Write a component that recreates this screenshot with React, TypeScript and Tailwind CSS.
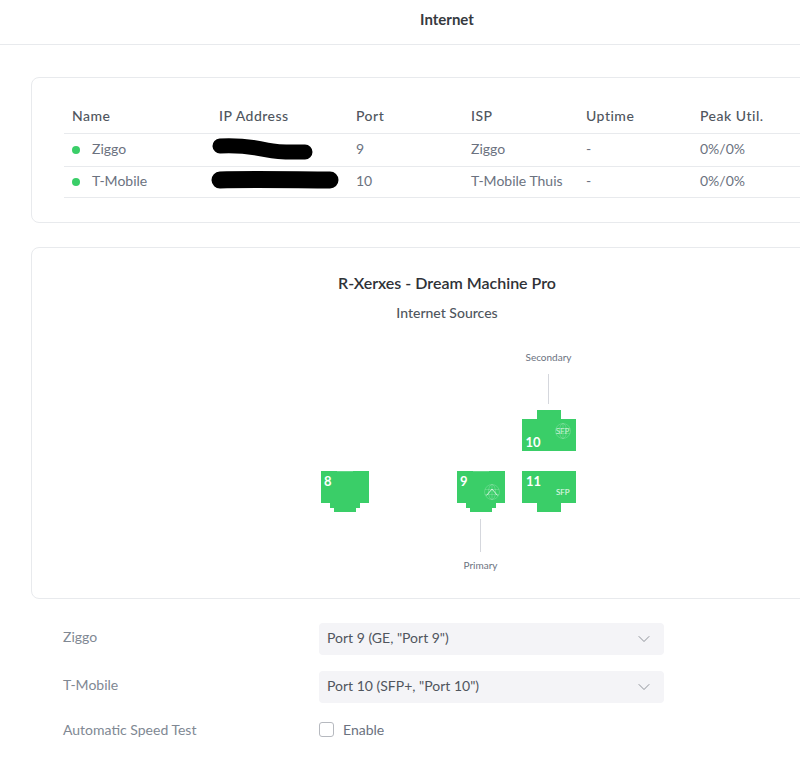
import { ChevronDown } from "lucide-react";

const green = "#3ACE68";

function PortGlobe({ sfp }: { sfp?: boolean }) {
  return (
    <svg width="16" height="16" viewBox="0 0 16 16" fill="none" stroke="#fff" strokeOpacity="0.3" strokeWidth="0.6">
      <circle cx="8" cy="8" r="7.5" />
      <ellipse cx="8" cy="8" rx="3.5" ry="7.5" />
      <path d="M1 5.5H15M1 10.5H15M8 .5V15.5" />
      {!sfp && <path d="M2.5 11.5L8 5L13.5 11.5" stroke="#fff" strokeOpacity="0.75" strokeWidth="1" />}
    </svg>
  );
}

function RjPort({ num, globe }: { num: string; globe?: boolean }) {
  return (
    <div className="relative w-12 h-[41px]">
      <svg width="48" height="41" viewBox="0 0 48 41">
        <path d="M0 0H48V32H39V37H35V41H13V37H9V32H0Z" fill={green} />
        <rect x="16" y="0" width="16" height="1" fill="#fff" opacity="0.2" />
      </svg>
      <span className="absolute left-[3px] top-px text-[13px] leading-[18px] font-bold text-white">{num}</span>
      {globe && (
        <span className="absolute left-[27px] top-[13px]">
          <PortGlobe />
        </span>
      )}
    </div>
  );
}

function SfpPort({ num, up }: { num: string; up?: boolean }) {
  return (
    <div className="relative w-[54px] h-[41px]">
      <svg width="54" height="41" viewBox="0 0 54 41">
        {up ? (
          <path d="M15 0H39V9H54V41H0V9H15Z" fill={green} />
        ) : (
          <path d="M0 0H54V32H39V41H15V32H0Z" fill={green} />
        )}
      </svg>
      {up ? (
        <>
          <span className="absolute left-[4px] top-[23px] text-[13px] leading-[18px] font-bold text-white">{num}</span>
          <span className="absolute left-[33px] top-[13px]">
            <PortGlobe sfp />
          </span>
          <span className="absolute left-[33px] top-[13px] w-4 text-center text-[8px] leading-4 text-white/70">SFP</span>
        </>
      ) : (
        <>
          <span className="absolute left-[4px] top-px text-[13px] leading-[18px] font-bold text-white">{num}</span>
          <span className="absolute left-[34px] top-[15px] text-[8px] leading-[12px] text-white/90">SFP</span>
        </>
      )}
    </div>
  );
}

function Row({ name, port, isp, h, scribble }: { name: string; port: string; isp: string; h: string; scribble: React.ReactNode }) {
  return (
    <tr className={`border-b border-[#e8eaed] text-[14px] text-[#6b7280] ${h}`}>
      <td className="pl-2 pb-[2px]">
        <span className="flex items-center gap-3">
          <span className="w-2 h-2 rounded-full bg-[#3ACE68] translate-y-px" />
          {name}
        </span>
      </td>
      <td className="relative pl-2">{scribble}</td>
      <td className="pl-2 pb-[2px]">{port}</td>
      <td className="pl-2 pb-[2px]">{isp}</td>
      <td className="pl-2 pb-[2px]">-</td>
      <td className="pl-2 pb-[2px]">0%/0%</td>
    </tr>
  );
}

function FieldSelect({ value }: { value: string }) {
  return (
    <div className="w-[345px] h-8 rounded bg-[#f4f4f7] flex items-center justify-between pl-2 pr-[10px] text-[14px] text-[#50565e]">
      <span className="pb-[3px]">{value}</span>
      <ChevronDown size={20} strokeWidth={1} color="#7b8087" />
    </div>
  );
}

export default function App() {
  return (
    <div className="w-[800px] h-[777px] overflow-hidden bg-white font-['Lato',sans-serif]">
      <div className="w-[894px]">
        <div className="h-[45px] pb-[6px] border-b border-[#e8eaed] flex items-center justify-center text-[15px] font-bold text-[#363a40]">
          Internet
        </div>
        <div className="px-[31px] pt-8">
          <div className="h-[146px] rounded-lg border border-[#e8eaed] px-8 pt-[21px]">
            <table className="w-[770px] table-fixed">
              <colgroup>
                <col className="w-[147px]" />
                <col className="w-[137px]" />
                <col className="w-[115px]" />
                <col className="w-[115px]" />
                <col className="w-[114px]" />
                <col />
              </colgroup>
              <thead>
                <tr className="h-[34px] border-b border-[#e8eaed] text-left text-[14px] tracking-[0.5px] text-[#50565e]">
                  <th className="pl-2 font-medium">Name</th>
                  <th className="pl-2 font-medium">IP Address</th>
                  <th className="pl-2 font-medium">Port</th>
                  <th className="pl-2 font-medium">ISP</th>
                  <th className="pl-2 font-medium">Uptime</th>
                  <th className="pl-2 font-medium">Peak Util.</th>
                </tr>
              </thead>
              <tbody>
                <Row
                  name="Ziggo"
                  port="9"
                  isp="Ziggo"
                  h="h-[33px]"
                  scribble={
                    <svg className="absolute left-0 top-[4px]" width="104" height="26" viewBox="0 0 104 26" fill="none">
                      <path d="M9 8C26 7 42 9 56 12C70 15 84 14 94 14" stroke="#000" strokeWidth="15" strokeLinecap="round" />
                    </svg>
                  }
                />
                <Row
                  name="T-Mobile"
                  port="10"
                  isp="T-Mobile Thuis"
                  h="h-[31px]"
                  scribble={
                    <svg className="absolute left-0 top-[2px]" width="130" height="24" viewBox="0 0 130 24" fill="none">
                      <path d="M9 11C40 10 90 11 119 11" stroke="#000" strokeWidth="17" strokeLinecap="round" />
                    </svg>
                  }
                />
              </tbody>
            </table>
          </div>

          <div className="mt-[24px] h-[352px] rounded-lg border border-[#e8eaed] flex flex-col items-center">
            <div className="mt-[25px] text-[16px] leading-5 font-semibold text-[#2f3237]">R-Xerxes - Dream Machine Pro</div>
            <div className="mt-[10px] text-[14px] leading-5 font-medium text-[#50565e]">Internet Sources</div>
            <div className="self-start ml-[289px] mt-[27px] grid grid-cols-[136px_65px_54px] gap-y-5">
              <div className="col-start-3 w-[53px] flex flex-col items-center">
                <span className="text-[10px] leading-[14px] text-[#6b7280]">Secondary</span>
                <span className="w-px h-[30px] mt-[10px] mb-[6px] bg-[#d5d7dd]" />
                <div className="w-[54px]">
                  <SfpPort num="10" up />
                </div>
              </div>
              <div className="col-start-1"><RjPort num="8" /></div>
              <div><RjPort num="9" globe /></div>
              <div><SfpPort num="11" /></div>
              <div className="col-start-2 w-[47px] -mt-[13px] flex flex-col items-center">
                <span className="w-px h-[33px] bg-[#d5d7dd]" />
                <span className="mt-[6px] text-[10px] leading-[14px] text-[#6b7280]">Primary</span>
              </div>
            </div>
          </div>

          <div className="mt-6 pl-8 flex flex-col text-[14px] text-[#808893]">
            <div className="flex items-center">
              <span className="w-64 pb-[5px]">Ziggo</span>
              <FieldSelect value={'Port 9 (GE, "Port 9")'} />
            </div>
            <div className="flex items-center mt-4">
              <span className="w-64 pb-[5px]">T-Mobile</span>
              <FieldSelect value={'Port 10 (SFP+, "Port 10")'} />
            </div>
            <div className="flex items-center mt-4">
              <span className="w-64">Automatic Speed Test</span>
              <span className="w-[15px] h-[15px] rounded-[3px] border border-[#b6b9bf]" />
              <span className="ml-[9px] text-[#6b7280]">Enable</span>
            </div>
          </div>
        </div>
      </div>
    </div>
  );
}
